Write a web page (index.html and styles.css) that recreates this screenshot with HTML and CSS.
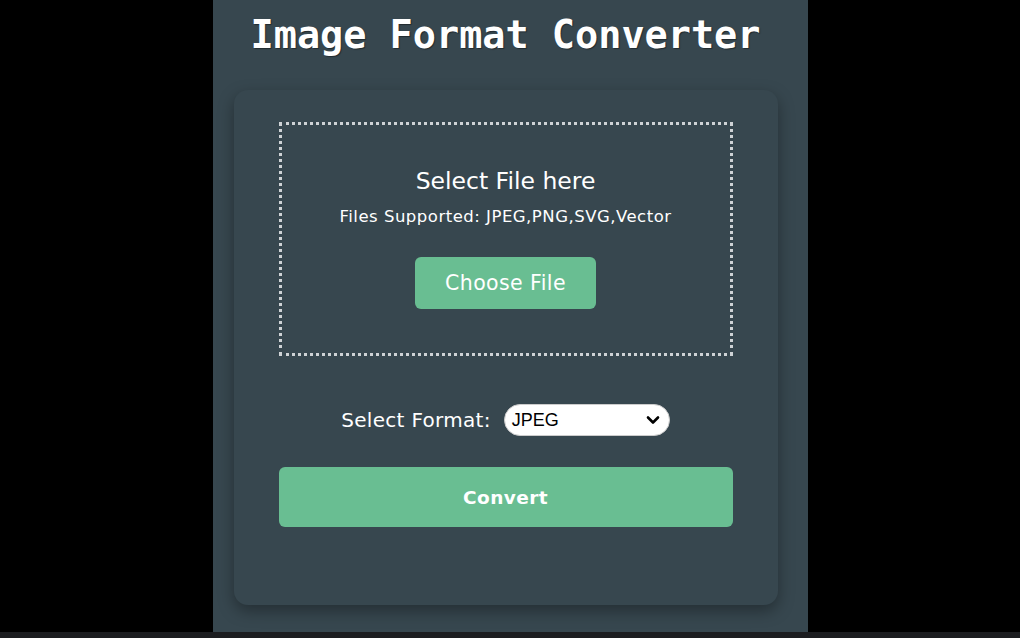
FILE: index.html
```html
<!DOCTYPE html>
<html>
<head>
<meta charset="utf-8">
<link rel="stylesheet" href="styles.css">
</head>
<body>
<div class="page">
  <main class="column">
    <h1 class="title">Image Format Converter</h1>
    <section class="card">
      <div class="drop">
        <p class="drop-title">Select File here</p>
        <p class="drop-sub">Files Supported: JPEG,PNG,SVG,Vector</p>
        <button class="choose">Choose File</button>
      </div>
      <div class="format-row">
        <label class="format-label">Select Format:</label>
        <div class="select">
          <span>JPEG</span>
          <svg class="chev" width="14" height="10" viewBox="0 0 14 10"><path d="M2 2.5 L7 7.5 L12 2.5" fill="none" stroke="#000" stroke-width="2.6" stroke-linecap="round" stroke-linejoin="round"/></svg>
        </div>
      </div>
      <button class="convert">Convert</button>
    </section>
  </main>
  <div class="strip"></div>
</div>
</body>
</html>
```

FILE: styles.css
```css
html, body {
  margin: 0;
  padding: 0;
  background: #000;
}
.page {
  width: 1020px;
  height: 638px;
  display: flex;
  flex-direction: column;
  align-items: center;
  overflow: hidden;
}
.column {
  width: 595px;
  height: 632px;
  box-sizing: border-box;
  padding-right: 9px;
  background: #37474f;
  display: flex;
  flex-direction: column;
  align-items: center;
  font-family: "DejaVu Sans", sans-serif;
  color: #fff;
}
.strip {
  width: 1020px;
  height: 6px;
  background: #1c1d20;
}
.title {
  margin: 13px 0 0 0;
  height: 77px;
  font-family: "DejaVu Sans Mono", monospace;
  font-weight: bold;
  font-size: 38.5px;
  line-height: 44px;
  color: #fff;
  text-shadow: 1px 1px 1px rgba(0,0,0,0.4);
}
.card {
  width: 544px;
  height: 515px;
  box-sizing: border-box;
  padding: 32px 45px 0 45px;
  border-radius: 14px;
  background: #37474f;
  box-shadow: 0 6px 16px rgba(0,0,0,0.35);
  display: flex;
  flex-direction: column;
}
.drop {
  height: 234px;
  box-sizing: border-box;
  border: 3px dotted #cfd3d6;
  display: flex;
  flex-direction: column;
  align-items: center;
}
.drop-title {
  margin: 41px 0 0 0;
  font-size: 23.5px;
  line-height: 30px;
}
.drop-sub {
  margin: 10px 0 0 0;
  font-size: 16.5px;
  letter-spacing: 0.5px;
  line-height: 22px;
}
.choose {
  margin-top: 29px;
  width: 181px;
  height: 52px;
  border: none;
  border-radius: 6px;
  background: #69be92;
  color: #fff;
  font-family: "DejaVu Sans", sans-serif;
  font-size: 20.5px;
  letter-spacing: 0.4px;
}
.format-row {
  margin-top: 48px;
  display: flex;
  align-items: center;
  justify-content: center;
  gap: 13px;
}
.format-label {
  font-size: 20px;
  letter-spacing: 0.3px;
}
.select {
  width: 166px;
  height: 32px;
  box-sizing: border-box;
  border-radius: 16px;
  background: #fff;
  border: 1px solid #ccc;
  color: #000;
  display: flex;
  align-items: center;
  justify-content: space-between;
  padding: 0 9px 0 7px;
  font-family: "Liberation Sans", sans-serif;
  font-size: 18px;
}
.convert {
  margin-top: 31px;
  height: 60px;
  border: none;
  border-radius: 6px;
  background: #69be92;
  color: #fff;
  font-family: "DejaVu Sans", sans-serif;
  font-weight: bold;
  font-size: 18.5px;
  letter-spacing: 0.4px;
}
```
